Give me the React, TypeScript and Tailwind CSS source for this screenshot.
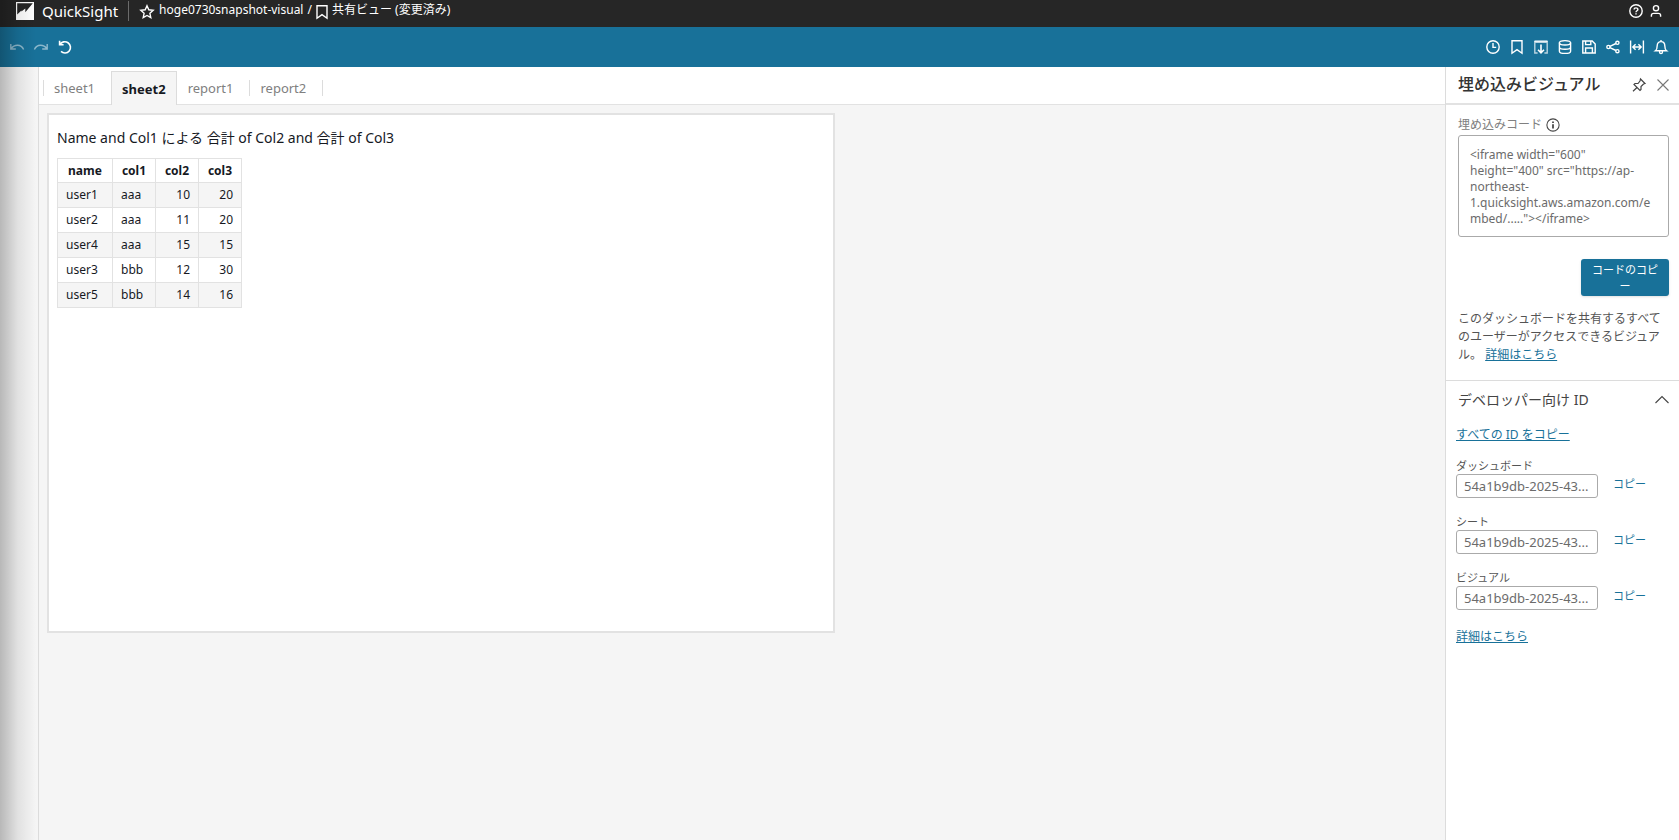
import { useState } from 'react';
import type { ReactNode } from 'react';
import clsx from 'clsx';

const TABS = ['sheet1', 'sheet2', 'report1', 'report2'];

const ROWS = [
  { name: 'user1', col1: 'aaa', col2: 10, col3: 20 },
  { name: 'user2', col1: 'aaa', col2: 11, col3: 20 },
  { name: 'user4', col1: 'aaa', col2: 15, col3: 15 },
  { name: 'user3', col1: 'bbb', col2: 12, col3: 30 },
  { name: 'user5', col1: 'bbb', col2: 14, col3: 16 },
];

const IDS = [
  { key: 'dashboard', label: 'ダッシュボード', value: '54a1b9db-2025-43...' },
  { key: 'sheet', label: 'シート', value: '54a1b9db-2025-43...' },
  { key: 'visual', label: 'ビジュアル', value: '54a1b9db-2025-43...' },
];

const EMBED_CODE =
  '<iframe width="600" height="400" src="https://ap-northeast-1.quicksight.aws.amazon.com/embed/....."></iframe>';

function Icon({ children, className = 'size-4' }: { children: ReactNode; className?: string }) {
  return (
    <svg
      viewBox="0 0 16 16"
      fill="none"
      stroke="currentColor"
      strokeWidth="1.4"
      className={clsx('shrink-0', className)}
      aria-hidden="true"
    >
      {children}
    </svg>
  );
}

const bookmark = <path d="M3 1.800h10v12.400L8 10.600l-5 3.600z" />;

const TOOLS = [
  { label: 'Schedule', icon: <><circle cx="8" cy="8" r="6.2" /><path d="M8 4v4.4h3.2" /></> },
  { label: 'Bookmarks', icon: bookmark },
  {
    label: 'Export',
    icon: (
      <>
        <path d="M1.500 2.200h13" />
        <path d="M4.600 14H1.800V2M14.200 2v12h-2.800M1.800 3.400h12.400" opacity="0.7" />
        <path d="M8 5.600v8M5 10.800l3 3 3-3" strokeWidth="1.600" />
      </>
    ),
  },
  {
    label: 'Data',
    icon: (
      <>
        <ellipse cx="8" cy="3.8" rx="5.600" ry="2.2" />
        <path d="M2.400 3.8v8.4c0 1.2 2.400 2.2 5.600 2.2s5.600-1 5.600-2.200V3.8M2.400 8c0 1.200 2.400 2.200 5.600 2.200s5.600-1 5.600-2.200" />
      </>
    ),
  },
  { label: 'Save', icon: <><path d="M1.8 2h9.4l3 3v9H1.8zM4.6 14V9h6.8v5M4.6 2v3.6h5.2V2" /></> },
  {
    label: 'Share',
    icon: (
      <>
        <circle cx="3.4" cy="8" r="1.6" />
        <circle cx="12.4" cy="3.8" r="1.6" />
        <circle cx="12.4" cy="12.2" r="1.6" />
        <path d="m4.9 7.3 6-2.800M4.900 8.700l6 2.800" />
      </>
    ),
  },
  {
    label: 'Fit',
    icon: (
      <>
        <path d="M1.600 1.600v12.800M14.400 1.600v12.800" />
        <path d="M4 8h8M6.600 5.200 3.800 8l2.800 2.800M9.400 5.200 12.200 8l-2.800 2.800" />
      </>
    ),
  },
  {
    label: 'Alerts',
    icon: (
      <path d="M2.400 11.800c1.600-1.200 1.800-2.600 1.800-5C4.200 4.200 5.800 2.600 8 2.600s3.800 1.600 3.800 4.200c0 2.400.2 3.800 1.800 5zM8 1v1.600M6.600 12.400v.8a1.400 1.400 0 0 0 2.800 0v-.8" />
    ),
  },
];

function TopBar() {
  return (
    <header className="flex h-[27px] items-start justify-between bg-[#262626] pr-[15px] pl-4 text-white">
      <div className="flex h-[22px] items-center">
        <svg viewBox="0 0 18 18" className="size-[18px]" aria-hidden="true">
          <path fill="#fff" d="M0 0h18v18H0z" />
          <path fill="#262626" d="M1.200 1.200h15.600L9.300 10.200V6.400L5.400 9.600v-1L1.200 12.600z" />
        </svg>
        <span className="ml-2 text-[15px]">QuickSight</span>
        <div className="mr-2.5 ml-2.5 h-5 w-px bg-[#6b6b6b]" />
        <div className="flex h-5 items-center self-start text-xs">
          <button type="button" aria-label="Favorite">
            <Icon className="mt-1 size-4">
              <path d="m8 1.800 1.800 4 4.400.5-3.300 3 .9 4.400L8 11.500l-3.800 2.200.9-4.400-3.300-3 4.400-.5z" />
            </Icon>
          </button>
          <span className="ml-1">hoge0730snapshot-visual</span>
          <span className="ml-1">/</span>
          <Icon className="mt-1 ml-0.5 size-4">{bookmark}</Icon>
          <span className="ml-0.5">共有ビュー (変更済み)</span>
        </div>
      </div>
      <div className="flex h-[22px] items-center gap-1">
        <button type="button" aria-label="Help">
          <Icon>
            <circle cx="8" cy="8" r="6.200" />
            <path d="M6.100 6.600c0-2.400 3.800-2.300 3.800-.1 0 1.300-1.900 1.300-1.900 2.700M8 10.200v1.400" />
          </Icon>
        </button>
        <button type="button" aria-label="Account">
          <Icon>
            <circle cx="8" cy="5.200" r="2.600" />
            <path d="M3.400 13.800v-1.300c0-1.300 1-2.100 2.200-2.100h4.800c1.200 0 2.200.8 2.200 2.100v1.300" />
          </Icon>
        </button>
      </div>
    </header>
  );
}

function ToolBar() {
  return (
    <div className="flex h-10 items-center justify-between bg-[#187199] pr-2.5 pl-[9px] text-white">
      <div className="flex gap-2">
        <button type="button" aria-label="Undo" disabled className="opacity-50">
          <Icon><path d="M1.800 5v5h5M2.200 9.600C5 5.500 12 4.500 14.600 10.500" /></Icon>
        </button>
        <button type="button" aria-label="Redo" disabled className="opacity-50">
          <Icon><path d="M14.200 5v5h-5M13.800 9.600C11 5.500 4 4.500 1.400 10.500" /></Icon>
        </button>
        <button type="button" aria-label="Reset">
          <Icon><path d="M2.600 1.800v4h4M3 5.600A5.600 5.600 0 1 1 4 12.400" strokeWidth="1.600" /></Icon>
        </button>
      </div>
      <div className="flex gap-2">
        {TOOLS.map((tool) => (
          <button key={tool.label} type="button" aria-label={tool.label}>
            <Icon>{tool.icon}</Icon>
          </button>
        ))}
      </div>
    </div>
  );
}

function SheetTabs() {
  const [active, setActive] = useState('sheet2');

  return (
    <nav className="flex h-[38px] items-end border-b border-[#e2e2e2] bg-white pl-1 text-[13px]">
      {TABS.map((tab, i) => (
        <button
          key={tab}
          type="button"
          onClick={() => setActive(tab)}
          className={clsx(
            'flex items-center',
            tab === active
              ? '-mb-px h-[34px] border border-b-0 border-[#dcdcdc] bg-[#f5f5f5] px-2.5 pt-0.5 font-bold text-[#16191f]'
              : 'h-[30px] text-[#808080]',
          )}
        >
          {tab !== active && (
            <span className={clsx('-mt-0.5 h-4 w-px', TABS[i - 1] === active ? 'bg-transparent' : 'bg-[#dcdcdc]')} />
          )}
          <span className={clsx(tab !== active && 'pr-4 pl-2.5')}>{tab}</span>
        </button>
      ))}
      <span className="mb-2 h-4 w-px bg-[#dcdcdc]" />
    </nav>
  );
}

function Visual() {
  return (
    <section className="h-[520px] w-[788px] border-2 border-[#e2e2e2] bg-white px-2 pt-[11px] text-[#16191f]">
      <h2 className="text-sm leading-6">Name and Col1 による 合計 of Col2 and 合計 of Col3</h2>
      <table className="mt-2 border-collapse text-xs">
        <thead>
          <tr className="h-6">
            <th className="w-[55px] border border-[#e2e2e2] p-0">name</th>
            <th className="w-[43px] border border-[#e2e2e2] p-0">col1</th>
            <th className="w-[43px] border border-[#e2e2e2] p-0">col2</th>
            <th className="w-[43px] border border-[#e2e2e2] p-0">col3</th>
          </tr>
        </thead>
        <tbody>
          {ROWS.map((row) => (
            <tr key={row.name} className="h-[25px] odd:bg-[#f5f5f5]">
              <td className="border border-[#e2e2e2] px-2 py-0">{row.name}</td>
              <td className="border border-[#e2e2e2] px-2 py-0">{row.col1}</td>
              <td className="border border-[#e2e2e2] px-2 py-0 text-right">{row.col2}</td>
              <td className="border border-[#e2e2e2] px-2 py-0 text-right">{row.col3}</td>
            </tr>
          ))}
        </tbody>
      </table>
    </section>
  );
}

function EmbedPanel() {
  const [open, setOpen] = useState(true);

  return (
    <aside className="w-[234px] shrink-0 border-l border-[#dcdcdc] bg-white text-xs text-[#545454]">
      <div className="flex h-[38px] items-center justify-between border-b-2 border-[#e2e2e2] pr-2 pl-3">
        <h2 className="pb-0.5 text-base font-medium text-[#333]">埋め込みビジュアル</h2>
        <div className="flex gap-2">
          <button type="button" aria-label="Pin" className="text-[#444]">
            <Icon>
              <path
                d="m9.500 2 4.500 4.500-1.500.5-2.500 2.500v3l-1 1L3 7.500l1-1h3L9 4zM6 10.500 2 14.200"
                strokeWidth="1.200"
              />
            </Icon>
          </button>
          <button type="button" aria-label="Close" className="text-[#777]">
            <Icon><path d="m2.500 2.500 11 11M13.500 2.500l-11 11" strokeWidth="1.100" /></Icon>
          </button>
        </div>
      </div>

      <div className="pt-2.5 pr-2.5 pb-4 pl-3">
        <div className="flex h-5 items-center gap-1 text-[#808080]">
          <label htmlFor="embed-code">埋め込みコード</label>
          <Icon className="size-3.5 text-[#444]">
            <circle cx="8" cy="8" r="7" strokeWidth="1.200" />
            <path d="M8 7v5M8 4v1.600" strokeWidth="2" />
          </Icon>
        </div>
        <textarea
          id="embed-code"
          readOnly
          value={EMBED_CODE}
          className="block h-[102px] w-full resize-none overflow-hidden rounded-[3px] border border-[#aaa] px-[11px] py-[11px] text-xs leading-4 text-[#6b6b6b]"
        />
        <div className="mt-[22px] flex justify-end">
          <button
            type="button"
            className="h-[37px] w-[88px] rounded-[3px] bg-[#187199] px-2 text-[11px] leading-4 text-white shadow"
          >
            コードのコピー
          </button>
        </div>
        <p className="mt-[14px] leading-[18px]">
          このダッシュボードを共有するすべてのユーザーがアクセスできるビジュアル。{' '}
          <a href="#embed" className="text-[#187199] underline">詳細はこちら</a>
        </p>
      </div>

      <div className="border-t border-[#dcdcdc] pl-2.5">
        <button
          type="button"
          onClick={() => setOpen(!open)}
          className="flex h-[38px] w-full items-center justify-between pr-[9px] pl-0.5 text-sm text-[#444]"
        >
          デベロッパー向け ID
          <Icon className={clsx('size-4', !open && 'rotate-180')}>
            <path d="m1.500 11 6.500-6.500 6.500 6.500" strokeWidth="1.100" />
          </Icon>
        </button>
        {open && (
          <>
            <a href="#copy-all" className="mt-[7px] block w-fit leading-[18px] text-[#187199] underline">
              すべての ID をコピー
            </a>
            <div className="mt-[14px] flex flex-col gap-4">
              {IDS.map((id) => (
                <div key={id.key}>
                  <label htmlFor={id.key} className="block text-[11px] leading-4">{id.label}</label>
                  <div className="flex items-start gap-[15px]">
                    <input
                      id={id.key}
                      readOnly
                      value={id.value}
                      className="h-6 w-[142px] rounded-[3px] border border-[#aaa] px-[7px] text-[13px] text-[#6b6b6b]"
                    />
                    <button type="button" className="text-[11px] leading-5 text-[#187199]">コピー</button>
                  </div>
                </div>
              ))}
            </div>
            <a href="#ids" className="mt-[18px] block w-fit leading-[18px] text-[#187199] underline">詳細はこちら</a>
          </>
        )}
      </div>
    </aside>
  );
}

export default function App() {
  return (
    <div className="relative flex min-h-screen flex-col bg-[#f5f5f5] font-['Noto_Sans','Noto_Sans_CJK_JP',sans-serif]">
      <TopBar />
      <ToolBar />
      <div className="flex flex-1">
        <div className="w-[39px] shrink-0 border-r border-[#dcdcdc]" />
        <main className="min-w-0 flex-1">
          <SheetTabs />
          <div className="p-2">
            <Visual />
          </div>
        </main>
        <EmbedPanel />
      </div>
      {/* shadow of the window edge on the left */}
      <div className="pointer-events-none absolute inset-y-0 left-0 w-9 bg-linear-to-r from-black/25 via-black/8 to-transparent" />
    </div>
  );
}
